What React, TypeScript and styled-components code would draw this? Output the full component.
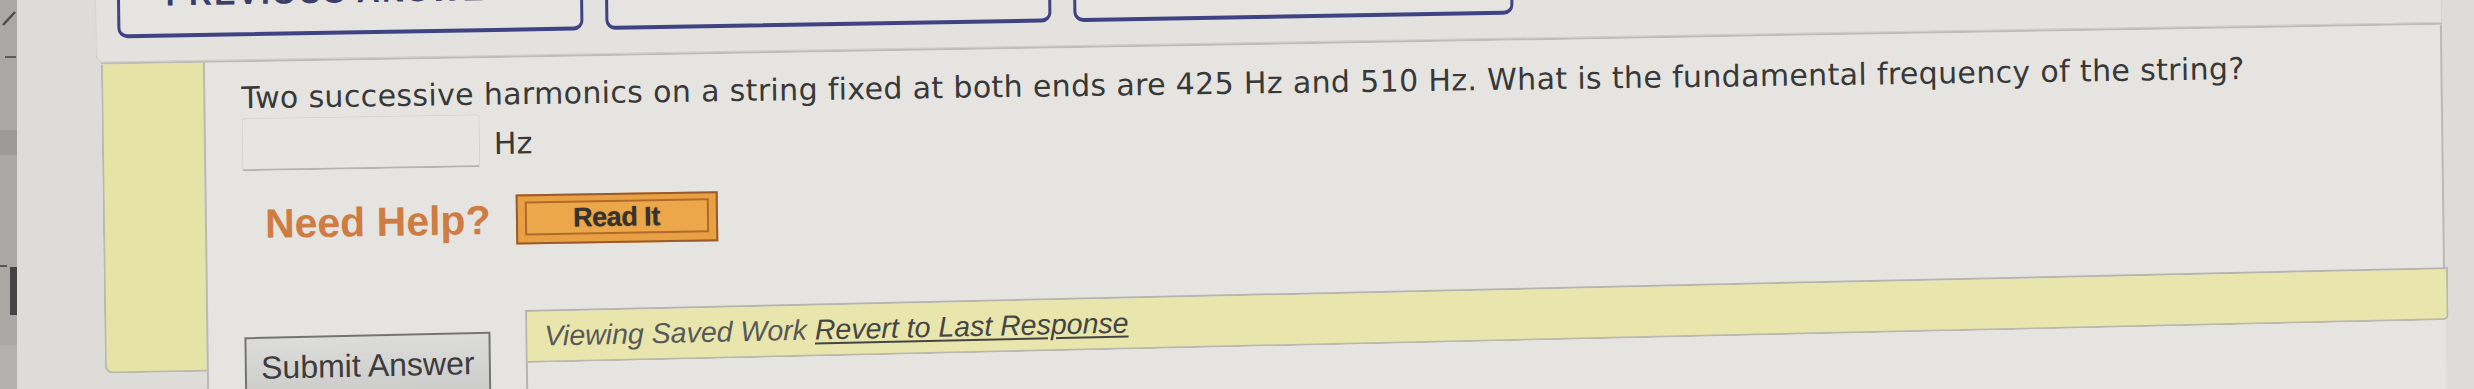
import React from "react";
import styled, { createGlobalStyle } from "styled-components";

const GlobalStyle = createGlobalStyle`
  html, body {
    margin: 0;
    padding: 0;
    overflow: hidden;
    background: #dddcd8;
  }
  #root {
    width: 2474px;
    height: 389px;
    overflow: hidden;
  }
`;

const Page = styled.div`
  display: flex;
  width: 2474px;
  height: 389px;
  background: #dddcd8;
`;

const LeftStrip = styled.div`
  flex: 0 0 17px;
  height: 389px;
  background: #a9a8a5;
  display: flex;
`;

const Stage = styled.div`
  flex: 0 0 2470px;
  height: 470px;
  box-sizing: border-box;
  padding-left: 78px;
  transform: matrix(1, -0.017, 0.013, 1, 0, 0);
  transform-origin: 0 0;
`;

const Column = styled.div`
  width: 2346px;
  display: flex;
  flex-direction: column;
`;

const OuterBox = styled.div`
  display: flex;
  background: #e3e2de;
  border: 1px solid #cfcec9;
  border-top: none;
  border-bottom-left-radius: 8px;
  padding: 0 0 23px 21px;
`;

const NavRow = styled.div`
  display: flex;
  gap: 22px;
  margin-top: -30px;
`;

const NavButton = styled.div<{ $w: number }>`
  width: ${(p) => p.$w}px;
  height: 70px;
  box-sizing: border-box;
  border: 3px solid #3f4383;
  border-bottom-width: 4px;
  border-radius: 0 0 10px 10px;
  background: #e5e4e0;
  display: flex;
  align-items: flex-end;
  justify-content: center;
  padding-bottom: 23px;
  font-family: "Liberation Sans", Arial, sans-serif;
  font-weight: bold;
  font-size: 32px;
  letter-spacing: 2px;
  line-height: 1;
  color: #3b3e68;
`;

const Panel = styled.div`
  margin-left: 5px;
  display: flex;
  border-top: 2px solid #bdbcb7;
`;

const Stripe = styled.div`
  flex: 0 0 100px;
  height: 307px;
  background: #e6e3a6;
  border-left: 2px solid #bab9b0;
  border-bottom: 2px solid #bab9b0;
  border-bottom-left-radius: 8px;
`;

const Content = styled.div`
  flex: 1;
  min-height: 420px;
  background: #e5e4e0;
  border-left: 2px solid #bab9b4;
  padding: 0 0 0 36px;
  display: flex;
  flex-direction: column;
`;

const QuestionBody = styled.div`
  padding-top: 18px;
  padding-bottom: 67px;
  border-right: 2px solid #bab9b4;
`;

const QuestionText = styled.p`
  margin: 0 0 2px 0;
  font-family: "DejaVu Sans", Verdana, sans-serif;
  font-size: 30px;
  letter-spacing: 0.35px;
  line-height: 36px;
  color: #383838;
  white-space: nowrap;
  transform: skewY(0.14deg);
  transform-origin: 0 50%;
`;

const AnswerRow = styled.div`
  display: flex;
  align-items: flex-end;
  gap: 14px;
`;

const AnswerInput = styled.div`
  width: 238px;
  height: 53px;
  box-sizing: border-box;
  border: 1px solid #d3d2ce;
  border-bottom: 2px solid #b4b3af;
  border-radius: 3px;
  background: #e6e5e1;
`;

const Unit = styled.span`
  font-family: "DejaVu Sans", Verdana, sans-serif;
  font-size: 30px;
  line-height: 36px;
  color: #383838;
  margin-bottom: 5px;
`;

const HelpRow = styled.div`
  display: flex;
  align-items: center;
  gap: 25px;
  margin-top: 28px;
  padding-left: 22px;
`;

const HelpLabel = styled.span`
  font-family: "Liberation Sans", Arial, sans-serif;
  font-weight: bold;
  font-size: 41px;
  line-height: 48px;
  color: #cf7c42;
`;

const ReadItButton = styled.div`
  width: 202px;
  height: 50px;
  box-sizing: border-box;
  border: 2px solid #9b5a2c;
  background: #e8a043;
  padding: 5px 7px 7px 7px;
  display: flex;
`;

const ReadItInner = styled.span`
  flex: 1;
  border: 2px solid #b06a2a;
  background: #eba74a;
  display: flex;
  align-items: center;
  justify-content: center;
  font-family: "Liberation Sans", Arial, sans-serif;
  font-weight: bold;
  font-size: 27px;
  letter-spacing: -0.5px;
  color: #35332f;
  text-shadow: 0 0 1px rgba(40, 30, 20, 0.6);
`;

const SubmitRow = styled.div`
  display: flex;
  align-items: flex-start;
  gap: 35px;
  margin-right: -3px;
  transform: skewY(-0.3deg);
  transform-origin: 0 0;
`;

const SubmitButton = styled.div`
  flex: 0 0 246px;
  height: 62px;
  margin-top: 21px;
  box-sizing: border-box;
  border: 2px solid #737373;
  background: linear-gradient(#dcdcda, #cbcbc9);
  display: flex;
  align-items: center;
  justify-content: center;
  font-family: "Liberation Sans", Arial, sans-serif;
  font-size: 32px;
  color: #3c3c3c;
`;

const SavedBox = styled.div`
  flex: 1;
  height: 120px;
  border-left: 2px solid #b5b4af;
  border-top: 2px solid #b5b4af;
  display: flex;
  flex-direction: column;
`;

const SavedBand = styled.div`
  height: 49px;
  background: #e8e6ac;
  border-bottom: 2px solid #b9b8af;
  border-right: 2px solid #b9b8af;
  border-bottom-right-radius: 6px;
  padding-left: 17px;
  font-family: "Liberation Sans", Arial, sans-serif;
  font-style: italic;
  font-size: 28.5px;
  line-height: 49px;
  color: #585858;
  white-space: nowrap;
`;

const RevertLink = styled.span`
  color: #454545;
  text-decoration: underline;
  text-underline-offset: 3px;
`;

const StripMarks = () => (
  <svg width="17" height="389" viewBox="0 0 17 389">
    <line x1="3" y1="25" x2="15" y2="12" stroke="#4d4d4d" strokeWidth="2.5" />
    <line x1="5" y1="57" x2="16" y2="57" stroke="#5a5a5a" strokeWidth="2" />
    <rect x="0" y="130" width="17" height="25" fill="#9c9b98" />
    <line x1="0" y1="266" x2="7" y2="266" stroke="#555" strokeWidth="2" />
    <rect x="10" y="267" width="7" height="48" fill="#454545" />
    <rect x="0" y="345" width="17" height="44" fill="#b3b2af" />
  </svg>
);

export default function App() {
  return (
    <>
      <GlobalStyle />
      <Page>
        <LeftStrip>
          <StripMarks />
        </LeftStrip>
        <Stage>
          <Column>
            <OuterBox>
              <NavRow>
                <NavButton $w={466}>PREVIOUS ANSWERS</NavButton>
                <NavButton $w={446} />
                <NavButton $w={440} />
              </NavRow>
            </OuterBox>
            <Panel>
              <Stripe />
              <Content>
                <QuestionBody>
                  <QuestionText>
                    Two successive harmonics on a string fixed at both ends are 425 Hz and 510 Hz. What is the
                    fundamental frequency of the string?
                  </QuestionText>
                  <AnswerRow>
                    <AnswerInput />
                    <Unit>Hz</Unit>
                  </AnswerRow>
                  <HelpRow>
                    <HelpLabel>Need Help?</HelpLabel>
                    <ReadItButton>
                      <ReadItInner>Read It</ReadItInner>
                    </ReadItButton>
                  </HelpRow>
                </QuestionBody>
                <SubmitRow>
                  <SubmitButton>Submit Answer</SubmitButton>
                  <SavedBox>
                    <SavedBand>
                      Viewing Saved Work <RevertLink>Revert to Last Response</RevertLink>
                    </SavedBand>
                  </SavedBox>
                </SubmitRow>
              </Content>
            </Panel>
          </Column>
        </Stage>
      </Page>
    </>
  );
}
